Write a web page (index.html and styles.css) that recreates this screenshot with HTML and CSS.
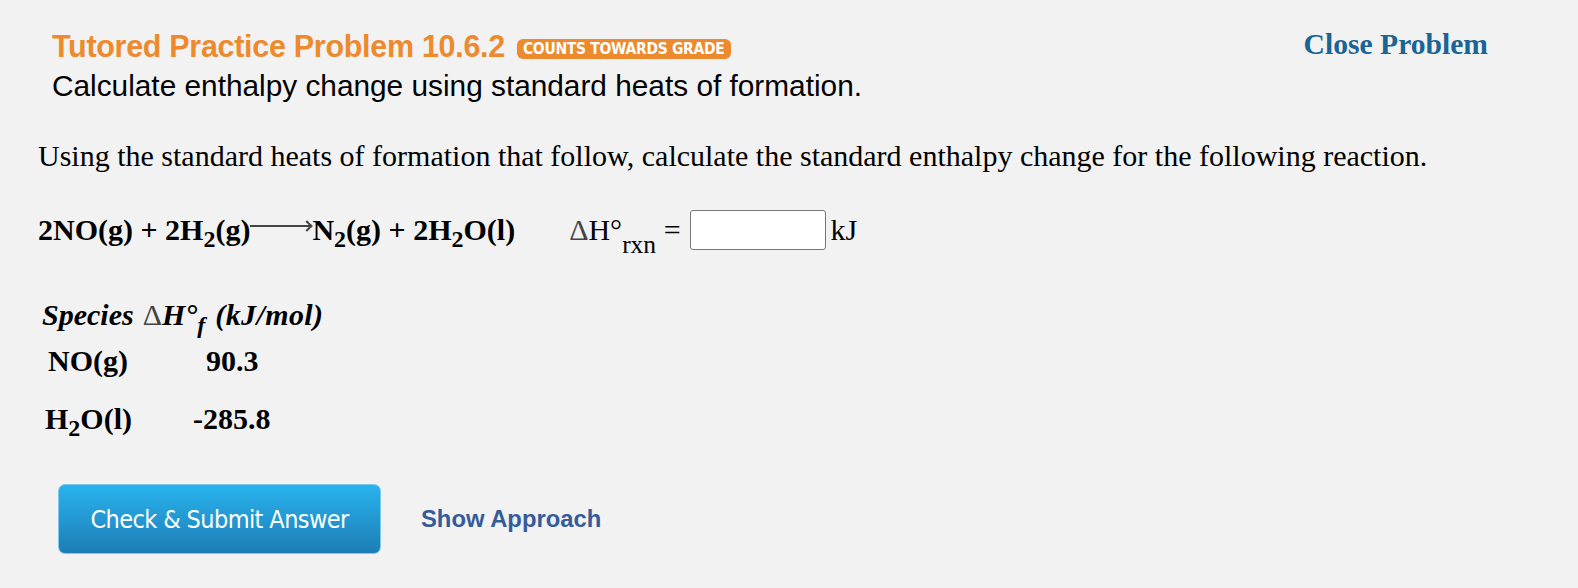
FILE: index.html
```html
<!DOCTYPE html>
<html>
<head>
<meta charset="utf-8">
<link rel="stylesheet" href="styles.css">
</head>
<body>
<div class="page">
  <header class="head">
    <div class="head-left">
      <div class="title-row">
        <span class="title">Tutored Practice Problem 10.6.2</span>
        <span class="badge">COUNTS TOWARDS GRADE</span>
      </div>
      <div class="subtitle">Calculate enthalpy change using standard heats of formation.</div>
    </div>
    <a class="close">Close Problem</a>
  </header>

  <p class="intro">Using the standard heats of formation that follow, calculate the standard enthalpy change for the following reaction.</p>

  <div class="equation">
    <span class="rxn">2NO(g) + 2H<sub>2</sub>(g)<span class="arrow"></span>N<sub>2</sub>(g) + 2H<sub>2</sub>O(l)</span>
    <span class="dh"><span class="delta">&Delta;</span>H&deg;<sub class="sub-rxn">rxn</sub> = </span>
    <span class="answer"></span>
    <span class="unit">kJ</span>
  </div>

  <div class="table">
    <div class="th">
      <span class="species">Species</span>
      <span class="dhf"><span class="delta">&Delta;</span>H&deg;<sub>f</sub></span>
      <span class="units">(kJ/mol)</span>
    </div>
    <div class="tr r1">
      <span class="c1 no">NO(g)</span>
      <span class="c2">90.3</span>
    </div>
    <div class="tr r2">
      <span class="c1 h2o">H<sub>2</sub>O(l)</span>
      <span class="c2">-285.8</span>
    </div>
  </div>

  <div class="actions">
    <button class="submit">Check &amp; Submit Answer</button>
    <a class="approach">Show Approach</a>
  </div>
</div>
</body>
</html>
```
FILE: styles.css
```css
html, body {
  margin: 0;
  padding: 0;
  background: #f2f2f2;
}
body {
  width: 1578px;
  height: 588px;
  overflow: hidden;
  color: #000;
}
.page {
  padding: 27px 0 0 0;
}
.head {
  display: flex;
  justify-content: space-between;
  align-items: flex-start;
  padding: 0 90px 0 52px;
}
.title-row {
  display: flex;
  align-items: center;
  height: 38px;
}
.title {
  font-family: "Liberation Sans", Arial, sans-serif;
  font-weight: bold;
  font-size: 30.5px;
  color: #ec8a2d;
  letter-spacing: -0.3px;
}
.badge {
  margin-left: 12px;
  background: #ec8a2d;
  color: #fff;
  font-family: "DejaVu Sans Condensed", sans-serif;
  font-weight: bold;
  font-size: 15.5px;
  letter-spacing: -0.3px;
  padding: 0 6px;
  border-radius: 6px;
  line-height: 20px;
  height: 20px;
  position: relative;
  top: 3px;
}
.subtitle {
  font-family: "Liberation Sans", Arial, sans-serif;
  font-size: 29.8px;
  line-height: 34px;
  margin-top: 4px;
}
.close {
  font-family: "Liberation Serif", "Times New Roman", serif;
  font-weight: bold;
  font-size: 29.6px;
  color: #1a6496;
  margin-top: 1px;
}
.intro {
  margin: 36px 0 0 38px;
  font-family: "Liberation Serif", "Times New Roman", serif;
  font-size: 30px;
  line-height: 34px;
}
.equation {
  margin: 36px 0 0 38px;
  display: flex;
  align-items: center;
  font-family: "Liberation Serif", "Times New Roman", serif;
  font-size: 30px;
  height: 42px;
}
.rxn {
  font-weight: bold;
}
sub {
  font-size: 0.8em;
  vertical-align: -0.3em;
  line-height: 0;
}
.arrow {
  display: inline-block;
  width: 62px;
  height: 10px;
  margin: 0;
  position: relative;
  vertical-align: 0.3em;
}
.arrow::before {
  content: "";
  position: absolute;
  left: 0;
  right: 1px;
  top: 4px;
  height: 2px;
  background: #444;
}
.arrow::after {
  content: "";
  position: absolute;
  right: 1px;
  top: 1px;
  width: 6px;
  height: 6px;
  border-top: 2px solid #444;
  border-right: 2px solid #444;
  transform: rotate(45deg);
  transform-origin: center;
}
.delta {
  color: #444;
}
.dh {
  margin-left: 54px;
}
.sub-rxn {
  font-size: 0.85em;
  vertical-align: -0.5em;
}
.answer {
  display: inline-block;
  width: 134px;
  height: 38px;
  background: #fff;
  border: 1px solid #777;
  border-radius: 3px;
  margin-left: 9px;
}
.unit {
  margin-left: 5px;
}
.table {
  margin: 47px 0 0 42px;
  font-family: "Liberation Serif", "Times New Roman", serif;
  font-weight: bold;
  font-size: 30px;
}
.th {
  display: flex;
  height: 36px;
  align-items: baseline;
}
.species, .units {
  font-style: italic;
}
.dhf {
  margin-left: 9px;
  font-style: italic;
}
.dhf .delta {
  font-style: normal;
  font-weight: normal;
}
.dhf sub {
  font-size: 0.8em;
  vertical-align: -0.35em;
}
.units {
  margin-left: 10px;
  letter-spacing: 0.4px;
}
.tr {
  display: flex;
  height: 40px;
  align-items: center;
}
.r1 {
  margin-top: 7px;
}
.r2 {
  margin-top: 18px;
}
.no { padding-left: 6px; width: 158px; }
.h2o { padding-left: 3px; width: 148px; }
.actions {
  display: flex;
  align-items: center;
  margin: 45px 0 0 58px;
}
.submit {
  width: 323px;
  height: 70px;
  border: 1px solid #80c8ea;
  border-radius: 7px;
  background: linear-gradient(#29b3ed, #1d7db6);
  color: #fff;
  font-family: "DejaVu Sans Condensed", "DejaVu Sans", sans-serif;
  font-size: 25px;
  letter-spacing: -0.6px;
  padding: 0;
}
.approach {
  margin-left: 40px;
  font-family: "Liberation Sans", Arial, sans-serif;
  font-weight: bold;
  font-size: 23.8px;
  color: #355b9a;
}
```
